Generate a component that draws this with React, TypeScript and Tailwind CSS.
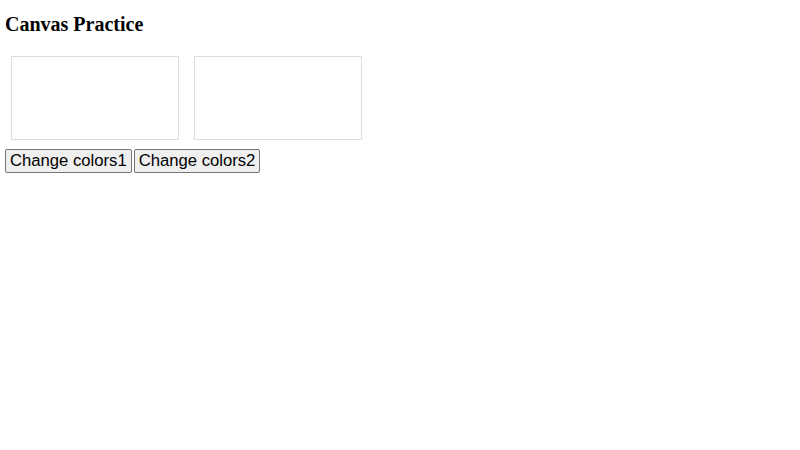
export default function App() {
  return (
    <div className="w-[800px] h-[450px] bg-white pl-[5px]">
      <h1 className="pt-[13px] text-[20px] leading-[23px] font-bold text-black" style={{ fontFamily: '"Liberation Serif", serif' }}>
        Canvas Practice
      </h1>
      <div className="mt-[20px] flex gap-[15px] pl-[6px]">
        <div className="w-[168px] h-[84px] border border-[#dddddd]" />
        <div className="w-[168px] h-[84px] border border-[#dddddd]" />
      </div>
      <div className="mt-[9px] flex gap-[2px]" style={{ fontFamily: '"Liberation Sans", Arial, sans-serif' }}>
        <button className="h-[24px] px-[4px] text-[16.67px] leading-[20px] text-black bg-[#efefef] border border-[#767676] rounded-[2px]">
          Change colors1
        </button>
        <button className="h-[24px] px-[4px] text-[16.67px] leading-[20px] text-black bg-[#efefef] border border-[#767676] rounded-[2px]">
          Change colors2
        </button>
      </div>
    </div>
  );
}
